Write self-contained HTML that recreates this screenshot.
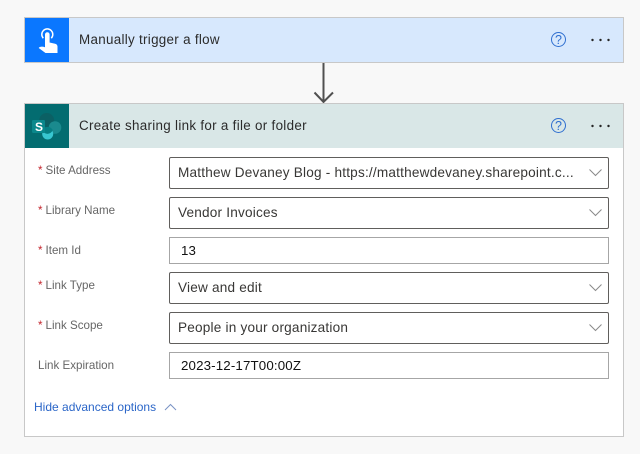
<!DOCTYPE html>
<html><head><meta charset="utf-8">
<style>
html,body{margin:0;padding:0;width:640px;height:454px;overflow:hidden;background:#f8f8f8;font-family:"Liberation Sans",sans-serif;color:#252525}
.a{position:absolute;white-space:nowrap}
.card{position:absolute;left:24px;width:598px;border:1px solid #c8c8c8;box-sizing:content-box}
.title{font-size:13.4px;line-height:16px;letter-spacing:.3px;color:#2b2b2b}
.lab{left:38px;font-size:11.6px;line-height:14px;color:#666}
.lab i{font-style:normal;color:#c4262e;margin-right:3px}
.dd{position:absolute;left:169px;width:438px;height:30px;border:1px solid #605e5c;border-radius:2px;background:#fff;font-size:13.6px;letter-spacing:.2px;line-height:30px;text-indent:8px;color:#383735;white-space:nowrap}
.tb{position:absolute;left:169px;width:438px;height:25px;border:1px solid #a6a6a6;background:#fff;font-size:13.3px;letter-spacing:.15px;line-height:25px;text-indent:11px;color:#111;white-space:nowrap}
svg{position:absolute;overflow:visible}
</style></head><body>

<div class="card" style="top:17px;height:44px;background:#d7e8fd"></div>
<div class="a" style="left:25px;top:18px;width:44px;height:44px;background:#0a77ff"></div>
<svg style="left:25px;top:18px" width="44" height="44" viewBox="0 0 44 44">
<path d="M18.3 20.2a5.5 5.5 0 1 1 8 0" fill="none" stroke="#fff" stroke-width="1.5"/>
<path d="M20 16.5a2.3 2.3 0 0 1 4.6 0V24.5l5.5 1.2c1.5.4 2.4 1.4 2.4 2.8V35H20.5L13.7 30c.8-1.5 3.5-1.7 6.3-.8z" fill="#fff"/>
</svg>
<div class="a title" style="left:79px;top:32px">Manually trigger a flow</div>
<svg style="left:551px;top:32px" width="16" height="16" viewBox="0 0 16 16"><circle cx="7.5" cy="7.5" r="7" fill="none" stroke="#2f6fd0" stroke-width="1"/><text x="7.5" y="12" text-anchor="middle" font-family="Liberation Sans" font-size="12.5" fill="#2f6fd0">?</text></svg>
<svg style="left:590px;top:36.5px" width="22" height="6" viewBox="0 0 22 6"><circle cx="2.5" cy="3" r="1.2" fill="#252525"/><circle cx="10.5" cy="3" r="1.2" fill="#252525"/><circle cx="18.5" cy="3" r="1.2" fill="#252525"/></svg>

<svg style="left:290px;top:55px" width="70" height="55" viewBox="0 0 70 55"><path d="M33.5 8V47M24.5 37.5L33.5 47L43 37.5" fill="none" stroke="#505050" stroke-width="2"/></svg>

<div class="card" style="top:103px;height:332px;background:#fff"></div>
<div class="a" style="left:25px;top:104px;width:598px;height:44px;background:#d9e7e7"></div>
<div class="a" style="left:25px;top:104px;width:44px;height:44px;background:#036c70"></div>
<svg style="left:25px;top:104px" width="44" height="44" viewBox="0 0 44 44">
<circle cx="21.7" cy="16.5" r="7.5" fill="#0b6064"/>
<circle cx="30" cy="23.5" r="6.3" fill="#1a8a8e"/>
<circle cx="22.7" cy="30" r="5.5" fill="#37c6d0"/>
<path d="M17.2 26a6 6 0 0 1 10.5 0a5.5 5.5 0 0 1-10.5 0z" fill="#067f83"/>
<rect x="7" y="16" width="13" height="13" rx="1.2" fill="#0a888c"/>
<text x="14" y="27" text-anchor="middle" font-family="Liberation Sans" font-size="12" font-weight="bold" fill="#fff">S</text>
</svg>
<div class="a title" style="left:79px;top:118px">Create sharing link for a file or folder</div>
<svg style="left:551px;top:118px" width="16" height="16" viewBox="0 0 16 16"><circle cx="7.5" cy="7.5" r="7" fill="none" stroke="#2f6fd0" stroke-width="1"/><text x="7.5" y="12" text-anchor="middle" font-family="Liberation Sans" font-size="12.5" fill="#2f6fd0">?</text></svg>
<svg style="left:590px;top:122.5px" width="22" height="6" viewBox="0 0 22 6"><circle cx="2.5" cy="3" r="1.2" fill="#252525"/><circle cx="10.5" cy="3" r="1.2" fill="#252525"/><circle cx="18.5" cy="3" r="1.2" fill="#252525"/></svg>

<div class="a lab" style="top:164px"><i>*</i>Site Address</div>
<div class="a lab" style="top:204px"><i>*</i>Library Name</div>
<div class="a lab" style="top:244px"><i>*</i>Item Id</div>
<div class="a lab" style="top:279px"><i>*</i>Link Type</div>
<div class="a lab" style="top:319px"><i>*</i>Link Scope</div>
<div class="a lab" style="top:359px">Link Expiration</div>

<div class="dd" style="top:157px">Matthew Devaney Blog - https://matthewdevaney.sharepoint.c...</div>
<div class="dd" style="top:197px">Vendor Invoices</div>
<div class="tb" style="top:237px">13</div>
<div class="dd" style="top:272px">View and edit</div>
<div class="dd" style="top:312px">People in your organization</div>
<div class="tb" style="top:352px">2023-12-17T00:00Z</div>

<svg style="left:589px;top:168px" width="14" height="10" viewBox="0 0 14 10"><path d="M0.5 1.5L6.5 7.5L12.5 1.5" fill="none" stroke="#8a8a8a" stroke-width="1"/></svg>
<svg style="left:589px;top:208px" width="14" height="10" viewBox="0 0 14 10"><path d="M0.5 1.5L6.5 7.5L12.5 1.5" fill="none" stroke="#8a8a8a" stroke-width="1"/></svg>
<svg style="left:589px;top:283px" width="14" height="10" viewBox="0 0 14 10"><path d="M0.5 1.5L6.5 7.5L12.5 1.5" fill="none" stroke="#8a8a8a" stroke-width="1"/></svg>
<svg style="left:589px;top:323px" width="14" height="10" viewBox="0 0 14 10"><path d="M0.5 1.5L6.5 7.5L12.5 1.5" fill="none" stroke="#8a8a8a" stroke-width="1"/></svg>

<div class="a" style="left:34px;top:400px;font-size:12px;line-height:14px;color:#2b66c8">Hide advanced options</div>
<svg style="left:164px;top:402px" width="14" height="10" viewBox="0 0 14 10"><path d="M1 8L6.5 2.5L12 8" fill="none" stroke="#7a93c4" stroke-width="1"/></svg>
</body></html>
